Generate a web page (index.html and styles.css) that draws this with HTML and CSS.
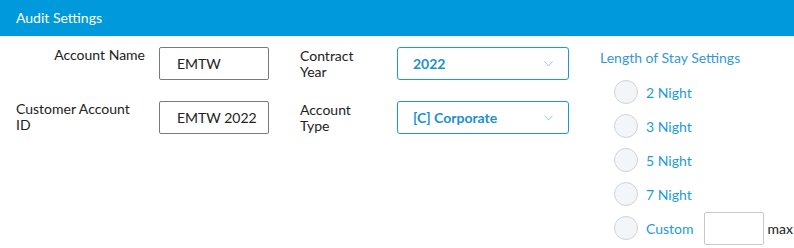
FILE: index.html
```html
<!DOCTYPE html>
<html>
<head>
<meta charset="utf-8">
<link rel="stylesheet" href="styles.css">
</head>
<body>
<div class="panel">
  <div class="panel-header">Audit Settings</div>
  <div class="panel-body">
    <div class="form-grid">
      <div class="label-cell"><div class="label">Account Name</div></div>
      <div class="text-input">EMTW</div>
      <div class="label2">Contract Year</div>
      <div class="select"><span class="select-value">2022</span>
        <svg class="chevron" width="9" height="6" viewBox="0 0 9 6"><path d="M0.5 0.5 L4.5 5 L8.5 0.5" fill="none" stroke="#8ccbee" stroke-width="1"/></svg>
      </div>

      <div class="label-cell"><div class="label">Customer Account ID</div></div>
      <div class="text-input">EMTW 2022</div>
      <div class="label2">Account Type</div>
      <div class="select"><span class="select-value">[C] Corporate</span>
        <svg class="chevron" width="9" height="6" viewBox="0 0 9 6"><path d="M0.5 0.5 L4.5 5 L8.5 0.5" fill="none" stroke="#8ccbee" stroke-width="1"/></svg>
      </div>
    </div>

    <div class="los">
      <div class="los-title">Length of Stay Settings</div>
      <div class="los-row"><span class="radio"></span><span class="los-label">2 Night</span></div>
      <div class="los-row"><span class="radio"></span><span class="los-label">3 Night</span></div>
      <div class="los-row"><span class="radio"></span><span class="los-label">5 Night</span></div>
      <div class="los-row"><span class="radio"></span><span class="los-label">7 Night</span></div>
      <div class="los-row"><span class="radio"></span><span class="los-label">Custom</span><span class="custom-input"></span><span class="max">max</span></div>
    </div>
  </div>
</div>
</body>
</html>
```

FILE: styles.css
```css
html, body {
  margin: 0;
  padding: 0;
  background: #ffffff;
}

body {
  font-family: Lato, "Open Sans", Arial, sans-serif;
  font-size: 14px;
  color: #222222;
}

.panel-header {
  height: 36px;
  line-height: 36px;
  background: #0099dc;
  color: #ffffff;
  padding-left: 16px;
  font-size: 14px;
}

.panel-body {
  display: flex;
  align-items: flex-start;
}

.form-grid {
  display: grid;
  grid-template-columns: 129px 110px 100px 172px;
  grid-template-rows: 33px 33px;
  column-gap: 14px;
  row-gap: 21px;
  padding: 11px 0 0 16px;
}

.label-cell {
  display: flex;
  justify-content: flex-end;
  line-height: 16px;
  padding-top: 0px;
}

.label2 {
  line-height: 16px;
  padding: 1px 13px 0 17px;
}

.text-input {
  box-sizing: border-box;
  border: 1px solid #7a7a7a;
  border-radius: 2px;
  height: 33px;
  line-height: 31px;
  padding-left: 17px;
  color: #222222;
}

.select {
  box-sizing: border-box;
  border: 1px solid #1b9ad9;
  border-radius: 3px;
  height: 33px;
  display: flex;
  align-items: center;
  justify-content: space-between;
  padding: 0 15px 0 15px;
}

.select-value {
  font-weight: bold;
  color: #1a8fd3;
}

.chevron {
  display: block;
  margin-top: 1px;
}

.los {
  margin-left: 31px;
  padding-top: 14px;
  display: flex;
  flex-direction: column;
}

.los-title {
  line-height: 16px;
  color: #3399d6;
  margin-bottom: 9px;
}

.los-row {
  height: 34px;
  display: flex;
  align-items: center;
  padding-left: 14px;
}

.radio {
  box-sizing: border-box;
  width: 24px;
  height: 24px;
  border-radius: 50%;
  border: 1px solid #cfd4d7;
  background: #f3f6f8;
  margin-right: 8px;
}

.los-label {
  color: #1e9ad9;
}

.custom-input {
  box-sizing: border-box;
  width: 60px;
  height: 33px;
  border: 1px solid #c9c9c9;
  border-radius: 2px;
  margin-left: 10px;
}

.max {
  margin-left: 4px;
  color: #222222;
}
```
